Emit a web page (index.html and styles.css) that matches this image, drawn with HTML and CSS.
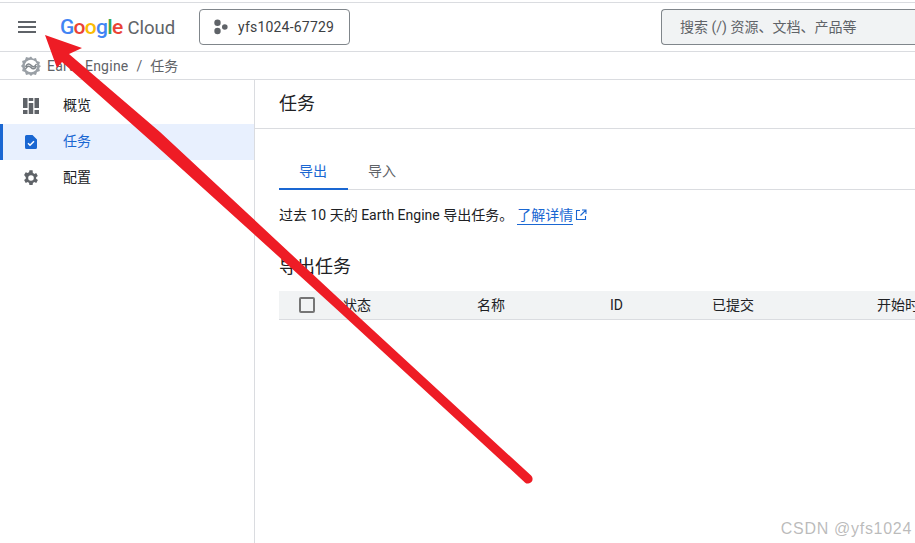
FILE: index.html
```html
<!DOCTYPE html>
<html lang="zh-CN">
<head>
<meta charset="utf-8">
<title>任务 - Earth Engine</title>
<link rel="stylesheet" href="styles.css">
</head>
<body>
<div class="page">
  <header class="topbar">
    <button class="menu-btn" aria-label="menu">
      <svg width="18" height="12" viewBox="0 0 18 12"><path d="M0 0h18v2H0zM0 5h18v2H0zM0 10h18v2H0z" fill="#5f6368"/></svg>
    </button>
    <div class="logo"><span class="lg-b">G</span><span class="lg-r">o</span><span class="lg-y">o</span><span class="lg-b">g</span><span class="lg-g">l</span><span class="lg-r">e</span><span class="lg-cloud">Cloud</span></div>
    <button class="project">
      <svg width="16" height="16" viewBox="0 0 16 16"><circle cx="4.500" cy="3.800" r="3.200" fill="#5f6368"/><circle cx="4.500" cy="12" r="3.200" fill="#5f6368"/><circle cx="11.800" cy="8" r="2.800" fill="#5f6368"/></svg>
      <span class="project-name">yfs1024-67729</span>
    </button>
    <div class="search"><span class="search-text">搜索 (/) 资源、文档、产品等</span></div>
  </header>
  <nav class="crumbs">
    <svg class="ee-icon" width="20" height="20" viewBox="0 0 20 20"><path d="M10 .5l2 2.300 3-.7 1 2.900 2.900 1-.7 3L20 10l-1.800 2 .7 3-2.900 1-1 2.900-3-.7-2 1.800-2-1.800-3 .7-1-2.900-2.900-1 .7-3L0 10l1.800-2-.7-3 2.900-1 1-2.900 3 .7z" fill="#9aa0a6"/><circle cx="10" cy="10" r="6.200" fill="#fff"/><path d="M4.500 10.800c1.800-3.500 3.800-3.500 5.500-1.500s3.700 2 5.500-1.300M4.500 13c1.800-3.500 3.800-3.500 5.500-1.500s3.700 2 5.500-1.300" fill="none" stroke="#80868b" stroke-width="1.500"/></svg>
    <span class="crumb crumb-latin">Earth Engine</span>
    <span class="crumb sep">/</span>
    <span class="crumb crumb-cjk">任务</span>
  </nav>
  <div class="body">
    <aside class="side">
      <div class="nav-item">
        <svg width="16" height="16" viewBox="0 0 16 16"><path d="M0 0h4.500v10H0zM0 12h4.500v4H0zM5.750 0h4.500v3h-4.500zM5.750 5h4.500v11h-4.500zM11.500 0H16v10h-4.500zM11.500 12H16v4h-4.500z" fill="#5f6368"/></svg>
        <span>概览</span>
      </div>
      <div class="nav-item active">
        <svg width="16" height="16" viewBox="0 0 16 16"><path d="M3.500 1H9.500L14 5.500V13.500A1.500 1.500 0 0 1 12.500 15H3.500A1.500 1.500 0 0 1 2 13.500V2.500A1.500 1.500 0 0 1 3.500 1z" fill="#1a67d2"/><path d="M5 9.300l2 2 4-4" fill="none" stroke="#fff" stroke-width="1.500"/></svg>
        <span>任务</span>
      </div>
      <div class="nav-item">
        <svg width="16" height="16" viewBox="2 2 20 20"><path d="M19.400 13a7.600 7.600 0 0 0 0-2l2.100-1.600-2-3.500-2.500 1a7.500 7.500 0 0 0-1.700-1L15 2.300h-4l-.4 2.600a7.500 7.500 0 0 0-1.700 1l-2.500-1-2 3.500L6.500 11a7.600 7.600 0 0 0 0 2l-2.100 1.600 2 3.500 2.500-1c.5.400 1.100.700 1.700 1l.4 2.600h4l.4-2.600c.6-.3 1.200-.6 1.700-1l2.500 1 2-3.500zM13 15.500a3.500 3.500 0 1 1 0-7 3.500 3.500 0 0 1 0 7z" fill="#5f6368" transform="translate(-1 0)"/></svg>
        <span>配置</span>
      </div>
    </aside>
    <main class="main">
      <h1 class="title">任务</h1>
      <div class="content">
        <div class="tabs">
          <div class="tab current">导出</div>
          <div class="tab">导入</div>
        </div>
        <p class="desc">过去 10 天的 Earth Engine 导出任务。 <a class="learn" href="#">了解详情</a><svg class="ext" width="12" height="12" viewBox="0 0 12 12"><path d="M5 1.500H1.500v9h9V7M7 1h4v4M11 1L5.500 6.500" fill="none" stroke="#1a67d2" stroke-width="1.100"/></svg></p>
        <h2 class="subtitle">导出任务</h2>
        <div class="table-head">
          <span class="checkbox"></span>
          <span class="col c-status">状态</span>
          <span class="col c-name">名称</span>
          <span class="col c-id">ID</span>
          <span class="col c-sub">已提交</span>
          <span class="col c-start">开始时间</span>
        </div>
      </div>
    </main>
  </div>
  <svg class="arrow" width="915" height="543" viewBox="0 0 915 543">
    <path d="M45 35L82 48 69 54 160 132 248.700 214.500 343.100 302.600 531.100 475.600A4.600 4.600 0 0 1 524.900 482.400L336.900 309.400 241.300 222.700 155.600 145.200 62 62 57 68z" fill="#ee1c25"/>
  </svg>
  <div class="watermark">CSDN @yfs1024</div>
</div>
</body>
</html>
```
FILE: styles.css
```css
* { box-sizing: border-box; }
html, body { margin: 0; padding: 0; }
body {
  font-family: Roboto, "Noto Sans CJK SC", sans-serif;
  color: #202124;
  background: #fff;
  overflow: hidden;
}
.page {
  position: relative;
  width: 915px;
  height: 543px;
  overflow: hidden;
  padding-top: 2px;
}
.topbar {
  height: 50px;
  border-top: 1px solid #dadce0;
  border-bottom: 1px solid #dadce0;
  display: flex;
  align-items: center;
  padding-left: 18px;
}
.menu-btn {
  border: 0;
  background: none;
  padding: 0;
  width: 18px;
  height: 12px;
  display: block;
  line-height: 0;
}
.logo {
  margin-left: 24px;
  width: 139px;
  font-family: Roboto, sans-serif;
  font-size: 21px;
  font-weight: 500;
  letter-spacing: -0.7px;
  white-space: nowrap;
}
.lg-b { color: #4285f4; }
.lg-r { color: #ea4335; }
.lg-y { color: #fbbc04; }
.lg-g { color: #34a853; }
.lg-cloud { color: #5f6368; margin-left: 5px; font-size: 18.500px; font-weight: 400; letter-spacing: 0; }
.project {
  width: 151px;
  height: 36px;
  border: 1px solid #80868b;
  border-radius: 4px;
  background: #fff;
  display: flex;
  align-items: center;
  gap: 9px;
  padding: 0 0 0 13px;
  font-family: Roboto, sans-serif;
  font-size: 14px;
  letter-spacing: 0.2px;
  color: #3c4043;
}
.project-name { padding-bottom: 1px; }
.search {
  margin-left: 311px;
  flex: 1;
  height: 36px;
  border: 1px solid #80868b;
  border-right: 0;
  border-radius: 4px 0 0 4px;
  background: #f1f3f4;
  display: flex;
  align-items: center;
  padding-left: 18px;
  font-size: 14px;
  color: #5f6368;
}
.search-text { padding-bottom: 3px; }
.crumbs {
  height: 28px;
  border-bottom: 1px solid #dadce0;
  display: flex;
  align-items: center;
  padding-left: 21px;
  font-size: 14px;
  color: #5f6368;
}
.ee-icon { margin-right: 6px; }
.crumb { white-space: nowrap; }
.crumb-latin { letter-spacing: 0.25px; }
.crumb-cjk { padding-bottom: 2px; }
.sep { margin: 0 8px; }
.body {
  display: flex;
  height: 464px;
}
.side {
  width: 255px;
  flex: none;
  border-right: 1px solid #dadce0;
  padding-top: 8px;
}
.nav-item {
  height: 36px;
  display: flex;
  align-items: center;
  padding-left: 23px;
  gap: 24px;
  font-size: 14px;
  color: #202124;
}
.nav-item span { padding-bottom: 4px; }
.nav-item.active {
  background: #e8f0fe;
  color: #1a67d2;
  box-shadow: inset 3px 0 0 #1a67d2;
}
.main { flex: 1; min-width: 0; }
.title {
  margin: 0;
  height: 49px;
  border-bottom: 1px solid #dadce0;
  padding-left: 24px;
  font-size: 18px;
  font-weight: 400;
  line-height: 47px;
}
.content { padding: 25px 0 0 24px; }
.tabs {
  display: flex;
  height: 36px;
  border-bottom: 1px solid #dadce0;
}
.tab {
  width: 69px;
  height: 36px;
  padding-left: 20px;
  line-height: 34px;
  font-size: 14px;
  color: #5f6368;
}
.tab.current {
  color: #1a67d2;
  border-bottom: 2px solid #1a67d2;
}
.desc {
  margin: 15px 0 0;
  height: 20px;
  font-size: 14px;
  line-height: 20px;
  white-space: nowrap;
  display: flex;
  align-items: center;
}
.learn {
  margin-left: 4px;
  color: #1a67d2;
  text-decoration: none;
  border-bottom: 1px solid #1a67d2;
  line-height: 18px;
  height: 19px;
}
.ext { margin-left: 2px; }
.subtitle {
  margin: 30px 0 0;
  font-size: 18px;
  font-weight: 400;
  line-height: 24px;
}
.table-head {
  margin-top: 12px;
  height: 29px;
  background: #f1f3f4;
  border-bottom: 1px solid #dadce0;
  display: flex;
  align-items: center;
  font-size: 14px;
  white-space: nowrap;
}
.checkbox {
  width: 16px;
  height: 16px;
  margin-left: 20px;
  border: 2px solid #757575;
  border-radius: 2px;
  flex: none;
}
.col { flex: none; padding-bottom: 2px; }
.c-status { margin-left: 28px; width: 134px; }
.c-name { width: 133px; }
.c-id { width: 102px; padding-bottom: 0; }
.c-sub { width: 165px; }
.arrow {
  position: absolute;
  left: 0;
  top: 0;
  pointer-events: none;
}
.watermark {
  position: absolute;
  right: 3px;
  bottom: 5px;
  font-family: "Liberation Sans", sans-serif;
  font-size: 16px;
  color: rgba(120, 120, 120, 0.5);
  letter-spacing: 0.7px;
}
```
